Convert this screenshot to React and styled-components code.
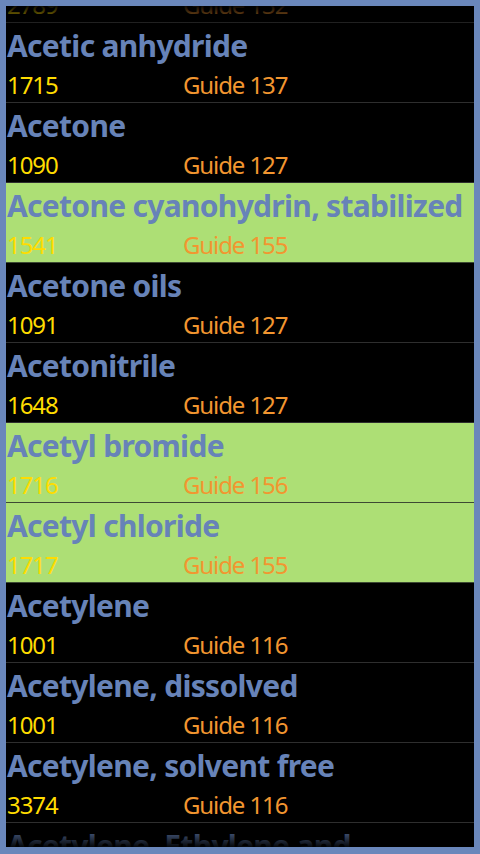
import React from "react";
import styled, { createGlobalStyle } from "styled-components";

const Global = createGlobalStyle`
  html, body { margin: 0; padding: 0; background: #6a87bb; }
  body { width: 480px; height: 854px; overflow: hidden; }
  #root { height: 854px; }
`;

const Frame = styled.div`
  box-sizing: border-box;
  width: 480px;
  height: 854px;
  padding: 6px 6px 7px 6px;
  background: #6a87bb;
  font-family: "Droid Sans", "Noto Sans", sans-serif;
`;

const Viewport = styled.div`
  position: relative;
  height: 100%;
  overflow: hidden;
  background: #000;
`;

const List = styled.ul`
  list-style: none;
  margin: 0;
  padding: 0;
  transform: translateY(${(p) => -p.$scroll}px);
`;

const Row = styled.li`
  box-sizing: border-box;
  height: 80px;
  padding: 1px 0 0 1px;
  background: ${(p) => (p.$hl ? "#addf75" : "#000")};
  border-bottom: 1px solid ${(p) => (p.$hl ? "#3d4a33" : "#2e2e2e")};
  display: flex;
  flex-direction: column;
`;

const Title = styled.div`
  color: #6783b8;
  font-weight: 700;
  font-size: 30px;
  line-height: 43px;
  white-space: nowrap;
  letter-spacing: -0.7px;
`;

const Meta = styled.div`
  display: flex;
  font-size: 24px;
  line-height: 35px;
  letter-spacing: -1.1px;
`;

const Num = styled.span`
  width: 176px;
  color: #ffdc00;
`;

const Guide = styled.span`
  color: #f29630;
`;

const Fade = styled.div`
  position: absolute;
  left: 0;
  right: 0;
  height: 24px;
  pointer-events: none;
  ${(p) =>
    p.$top
      ? "top: 0; background: linear-gradient(to bottom, rgba(0,0,0,0.95) 0%, rgba(0,0,0,0) 100%);"
      : "bottom: 0; background: linear-gradient(to top, rgba(0,0,0,0.95) 0%, rgba(0,0,0,0) 100%);"}
`;

const items = [
  ["Acetic acid, glacial", "2789", "132", false],
  ["Acetic anhydride", "1715", "137", false],
  ["Acetone", "1090", "127", false],
  ["Acetone cyanohydrin, stabilized", "1541", "155", true],
  ["Acetone oils", "1091", "127", false],
  ["Acetonitrile", "1648", "127", false],
  ["Acetyl bromide", "1716", "156", true],
  ["Acetyl chloride", "1717", "155", true],
  ["Acetylene", "1001", "116", false],
  ["Acetylene, dissolved", "1001", "116", false],
  ["Acetylene, solvent free", "3374", "116", false],
  ["Acetylene, Ethylene and", "3138", "115", false],
];

export default function App() {
  return (
    <>
      <Global />
      <Frame>
        <Viewport>
          <List $scroll={63}>
            {items.map(([name, num, guide, hl], i) => (
              <Row key={i} $hl={hl}>
                <Title>{name}</Title>
                <Meta>
                  <Num>{num}</Num>
                  <Guide>Guide {guide}</Guide>
                </Meta>
              </Row>
            ))}
          </List>
          <Fade $top />
          <Fade />
        </Viewport>
      </Frame>
    </>
  );
}
